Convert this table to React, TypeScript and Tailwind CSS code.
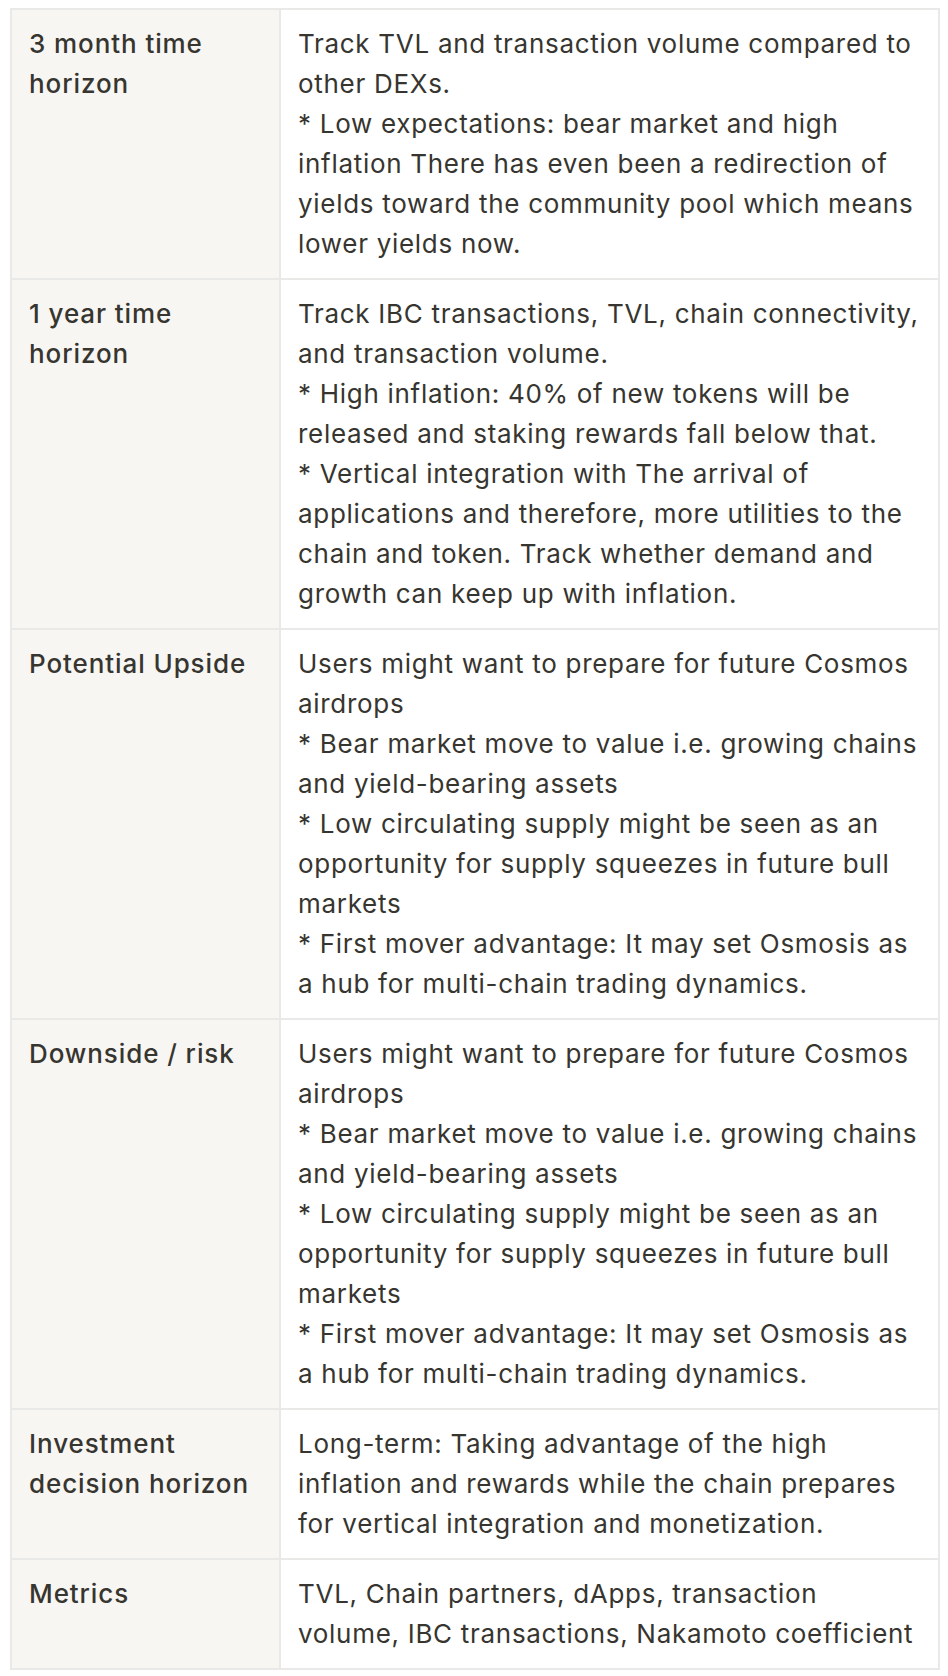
import React from "react";

type Row = {
  label: string[];
  lines: string[];
};

const rows: Row[] = [
  {
    label: ["3 month time", "horizon"],
    lines: [
      "Track TVL and transaction volume compared to",
      "other DEXs.",
      "* Low expectations: bear market and high",
      "inflation There has even been a redirection of",
      "yields toward the community pool which means",
      "lower yields now.",
    ],
  },
  {
    label: ["1 year time", "horizon"],
    lines: [
      "Track IBC transactions, TVL, chain connectivity,",
      "and transaction volume.",
      "* High inflation: 40% of new tokens will be",
      "released and staking rewards fall below that.",
      "* Vertical integration with The arrival of",
      "applications and therefore, more utilities to the",
      "chain and token. Track whether demand and",
      "growth can keep up with inflation.",
    ],
  },
  {
    label: ["Potential Upside"],
    lines: [
      "Users might want to prepare for future Cosmos",
      "airdrops",
      "* Bear market move to value i.e. growing chains",
      "and yield-bearing assets",
      "* Low circulating supply might be seen as an",
      "opportunity for supply squeezes in future bull",
      "markets",
      "* First mover advantage: It may set Osmosis as",
      "a hub for multi-chain trading dynamics.",
    ],
  },
  {
    label: ["Downside / risk"],
    lines: [
      "Users might want to prepare for future Cosmos",
      "airdrops",
      "* Bear market move to value i.e. growing chains",
      "and yield-bearing assets",
      "* Low circulating supply might be seen as an",
      "opportunity for supply squeezes in future bull",
      "markets",
      "* First mover advantage: It may set Osmosis as",
      "a hub for multi-chain trading dynamics.",
    ],
  },
  {
    label: ["Investment", "decision horizon"],
    lines: [
      "Long-term: Taking advantage of the high",
      "inflation and rewards while the chain prepares",
      "for vertical integration and monetization.",
    ],
  },
  {
    label: ["Metrics"],
    lines: [
      "TVL, Chain partners, dApps, transaction",
      "volume, IBC transactions, Nakamoto coefficient",
    ],
  },
];

export default function App() {
  return (
    <div
      className="bg-white min-h-[1676px] pt-2 pl-[10px] text-[#37352f]"
      style={{ fontFamily: "Inter, 'Noto Sans', sans-serif" }}
    >
      <table className="border-collapse w-[930px] table-fixed text-[26px] leading-[40px] tracking-[0.027em]">
        <colgroup>
          <col className="w-[269px]" />
          <col />
        </colgroup>
        <tbody>
          {rows.map((row, i) => (
            <tr key={i}>
              <td className="align-top bg-[#f7f6f3] border-2 border-[#e9e9e7] pl-[17px] pr-2 pt-[14px] pb-[14px] font-medium tracking-[0.035em]">
                {row.label.map((l, j) => (
                  <div key={j} className="whitespace-nowrap">
                    {l}
                  </div>
                ))}
              </td>
              <td className="align-top border-2 border-[#e9e9e7] pl-[17px] pr-2 pt-[14px] pb-[14px]">
                {row.lines.map((l, j) => (
                  <div key={j} className="whitespace-nowrap">
                    {l}
                  </div>
                ))}
              </td>
            </tr>
          ))}
        </tbody>
      </table>
    </div>
  );
}
